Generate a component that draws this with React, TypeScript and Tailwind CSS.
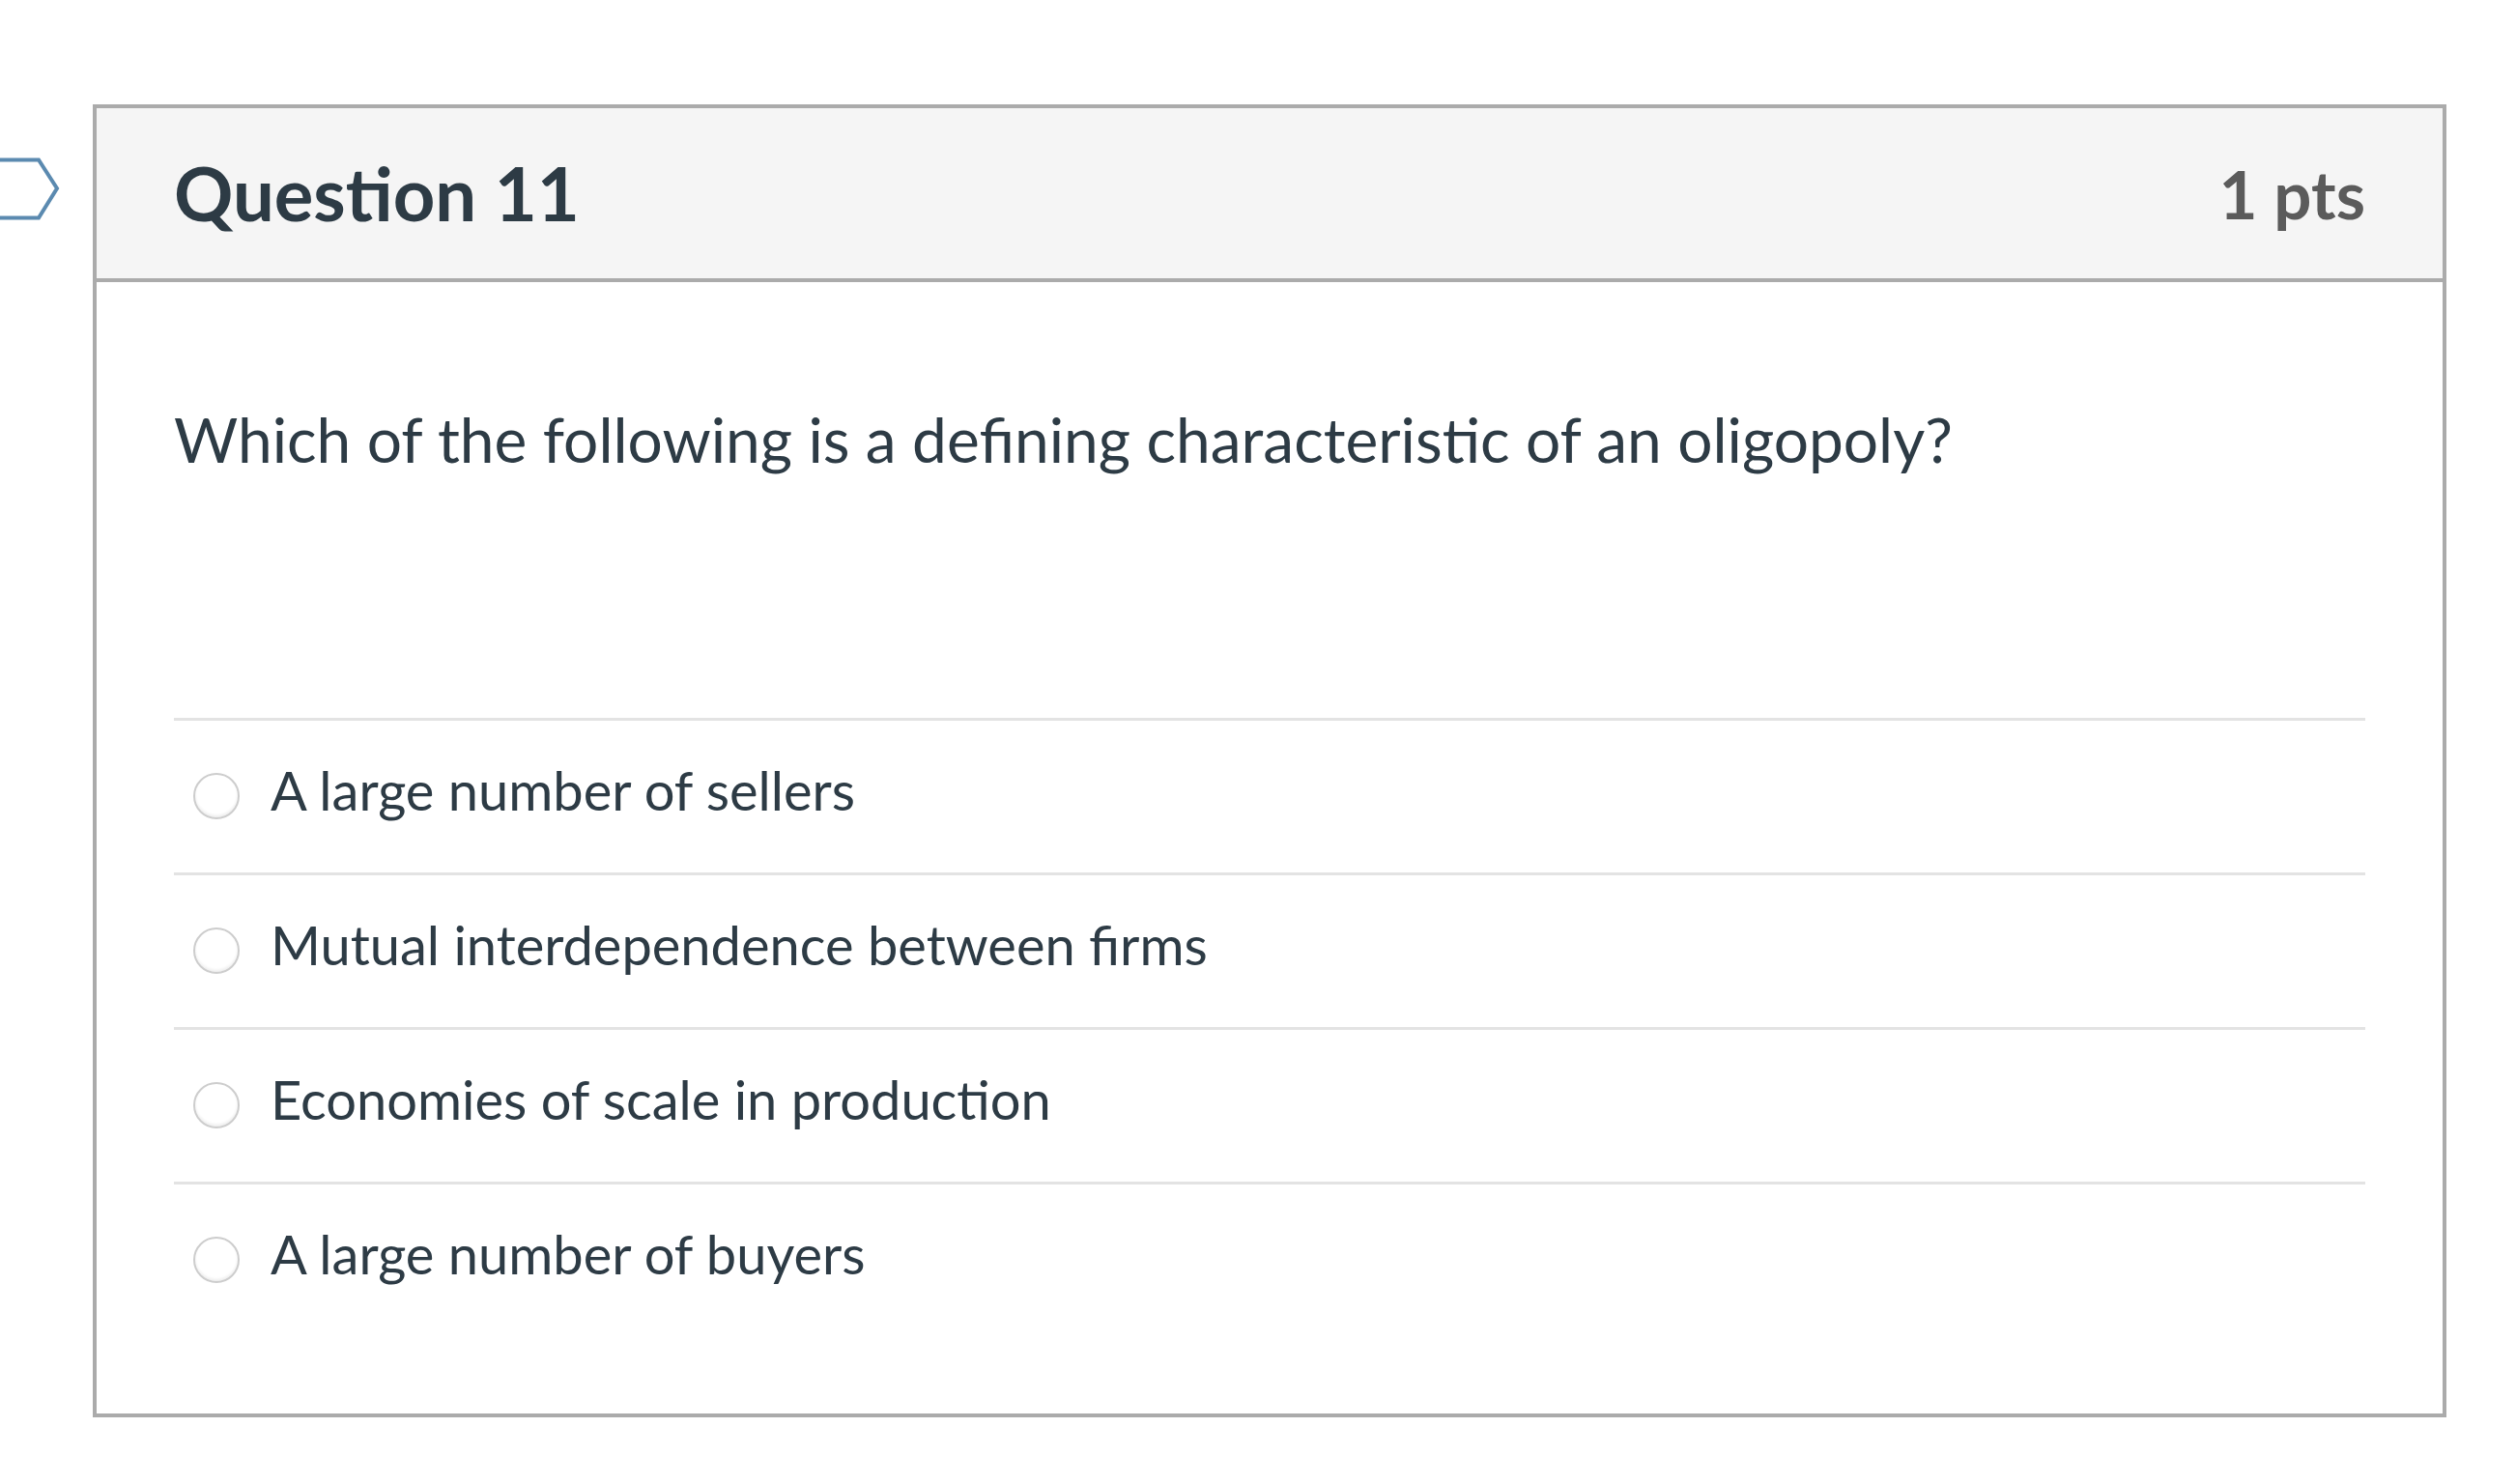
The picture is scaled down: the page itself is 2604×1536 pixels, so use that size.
import React from "react";

const answers = [
  "A large number of sellers",
  "Mutual interdependence between firms",
  "Economies of scale in production",
  "A large number of buyers",
];

function FlagMarker() {
  return (
    <svg
      className="absolute left-0 top-[160px]"
      width="70"
      height="70"
      viewBox="0 0 70 70"
      fill="none"
    >
      <path
        d="M-6 5.5 H40 L59 35 L40 65.5 H-6"
        stroke="#5b8ab0"
        strokeWidth="4"
        strokeLinejoin="miter"
      />
    </svg>
  );
}

function AnswerRow({ label }: { label: string }) {
  return (
    <label className="flex h-[160px] items-start border-t-[3px] border-[#e3e3e3] cursor-pointer">
      <span className="ml-[20px] mt-[54px] h-[48px] w-[48px] shrink-0 rounded-full border-2 border-[#cdcdcd] bg-white shadow-[inset_0_-2px_3px_rgba(0,0,0,0.07)]" />
      <span className="ml-[32px] mt-[44px] text-[56px] leading-none text-[#2d3b45]">
        {label}
      </span>
    </label>
  );
}

export default function App() {
  return (
    <div className="relative min-h-screen bg-white pt-[108px] font-['Lato','Noto_Sans',sans-serif]">
      <FlagMarker />
      <div className="ml-[96px] w-[2436px] border-4 border-[#ababab] bg-white">
        {/* header */}
        <div className="flex h-[180px] items-center justify-between border-b-4 border-[#ababab] bg-[#f5f5f5] px-[80px]">
          <h2 className="text-[76px] font-bold leading-none text-[#2d3b45]">Question 11</h2>
          <div className="text-[69px] font-bold leading-none text-[#5b5b5b]">1 pts</div>
        </div>

        {/* body */}
        <div className="px-[80px] pt-[131px] pb-[80px]">
          <p className="text-[64px] leading-none text-[#2d3b45]">
            Which of the following is a defining characteristic of an oligopoly?
          </p>
          <div className="mt-[256px]">
            {answers.map((a) => (
              <AnswerRow key={a} label={a} />
            ))}
          </div>
        </div>
      </div>
    </div>
  );
}
